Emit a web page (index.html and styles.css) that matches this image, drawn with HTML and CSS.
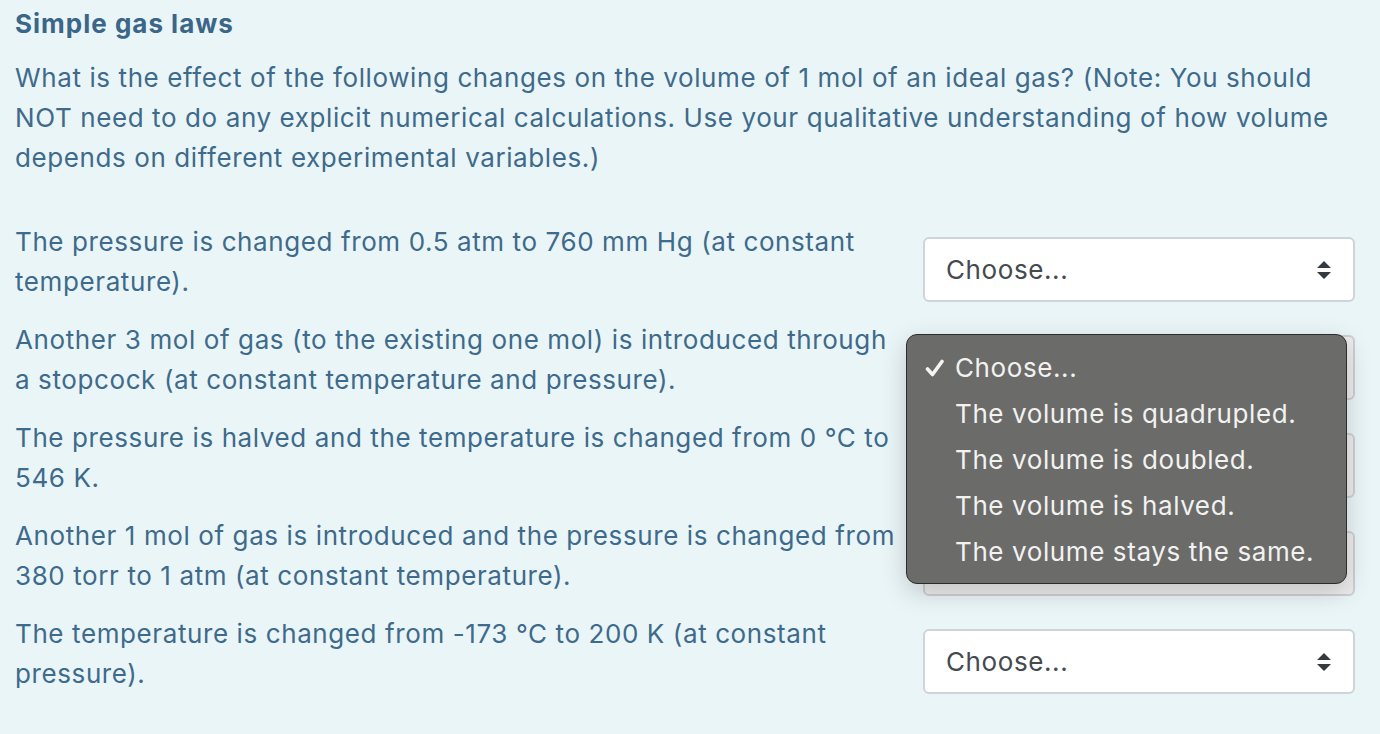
FILE: index.html
```html
<!DOCTYPE html>
<html>
<head>
<meta charset="utf-8">
<link rel="stylesheet" href="styles.css">
</head>
<body>
<div class="page">
  <h2 class="title">Simple gas laws</h2>
  <p class="intro">What is the effect of the following changes on the volume of 1 mol of an ideal gas? (Note: You should NOT need to do any explicit numerical calculations. Use your qualitative understanding of how volume depends on different experimental variables.)</p>
  <div class="rows">
    <div class="row">
      <div class="label">The pressure is changed from 0.5 atm to 760 mm Hg (at constant temperature).</div>
      <div class="select"><span>Choose...</span><svg class="arrows" width="16" height="24" viewBox="0 0 16 24"><path d="M8 3 L15 10 H1 Z M8 21 L15 14 H1 Z" fill="#343a40"/></svg></div>
    </div>
    <div class="row">
      <div class="label">Another 3 mol of gas (to the existing one mol) is introduced through a stopcock (at constant temperature and pressure).</div>
      <div class="select dim"><span>Choose...</span><svg class="arrows" width="16" height="24" viewBox="0 0 16 24"><path d="M8 3 L15 10 H1 Z M8 21 L15 14 H1 Z" fill="#343a40"/></svg></div>
    </div>
    <div class="row">
      <div class="label">The pressure is halved and the temperature is changed from 0 °C to 546 K.</div>
      <div class="select dim"><span>Choose...</span><svg class="arrows" width="16" height="24" viewBox="0 0 16 24"><path d="M8 3 L15 10 H1 Z M8 21 L15 14 H1 Z" fill="#343a40"/></svg></div>
    </div>
    <div class="row">
      <div class="label">Another 1 mol of gas is introduced and the pressure is changed from 380 torr to 1 atm (at constant temperature).</div>
      <div class="select dim"><span>Choose...</span><svg class="arrows" width="16" height="24" viewBox="0 0 16 24"><path d="M8 3 L15 10 H1 Z M8 21 L15 14 H1 Z" fill="#343a40"/></svg></div>
    </div>
    <div class="row">
      <div class="label">The temperature is changed from -173 °C to 200 K (at constant pressure).</div>
      <div class="select"><span>Choose...</span><svg class="arrows" width="16" height="24" viewBox="0 0 16 24"><path d="M8 3 L15 10 H1 Z M8 21 L15 14 H1 Z" fill="#343a40"/></svg></div>
    </div>
  </div>
  <div class="menu">
    <div class="opt"><svg class="check" width="20" height="20" viewBox="0 0 20 20"><path d="M2.5 11 L7.5 16.5 L17 3.5" fill="none" stroke="#f4f4f4" stroke-width="3.6" stroke-linecap="round" stroke-linejoin="round"/></svg>Choose...</div>
    <div class="opt">The volume is quadrupled.</div>
    <div class="opt">The volume is doubled.</div>
    <div class="opt">The volume is halved.</div>
    <div class="opt">The volume stays the same.</div>
  </div>
</div>
</body>
</html>
```

FILE: styles.css
```css
html, body {
  margin: 0;
  padding: 0;
  background: #eaf5f8;
}
body {
  font-family: Inter, "Noto Sans", sans-serif;
  color: #3e6a8b;
  width: 1380px;
  height: 734px;
  overflow: hidden;
  letter-spacing: 0.6px;
}
.page {
  position: relative;
  padding: 4px 0 0 15px;
}
.title {
  margin: 0;
  font-size: 26px;
  line-height: 40px;
  font-weight: 700;
  color: #3b6688;
  letter-spacing: 1px;
}
.intro {
  margin: 14px 0 0 0;
  font-size: 26px;
  line-height: 40px;
  width: 1340px;
}
.rows {
  margin-top: 44px;
  display: flex;
  flex-direction: column;
  gap: 18px;
}
.row {
  display: flex;
  align-items: flex-end;
  height: 80px;
}
.label {
  width: 890px;
  font-size: 26px;
  line-height: 40px;
}
.select {
  margin-left: 18px;
  width: 432px;
  height: 65px;
  box-sizing: border-box;
  border: 2px solid #ced4da;
  border-radius: 6px;
  background: #fff;
  display: flex;
  align-items: center;
  justify-content: space-between;
  padding: 0 21px 0 21px;
  font-size: 26px;
  color: #444a50;
}
.select.dim {
  background: #ececec;
  border-color: #cfcfcf;
}
.select.dim > * {
  visibility: hidden;
}
.arrows {
  display: block;
}
.menu {
  position: absolute;
  left: 906px;
  top: 334px;
  width: 441px;
  height: 250px;
  box-sizing: border-box;
  background: #6b6b69;
  border: 1.5px solid #2c2c2c;
  border-radius: 11px;
  padding-top: 10px;
  box-shadow: 0 8px 26px rgba(0, 0, 0, 0.18);
}
.opt {
  height: 46px;
  line-height: 46px;
  font-size: 26px;
  color: #f2f2f1;
  padding-left: 48px;
  position: relative;
}
.check {
  position: absolute;
  left: 18px;
  top: 13px;
}
```
